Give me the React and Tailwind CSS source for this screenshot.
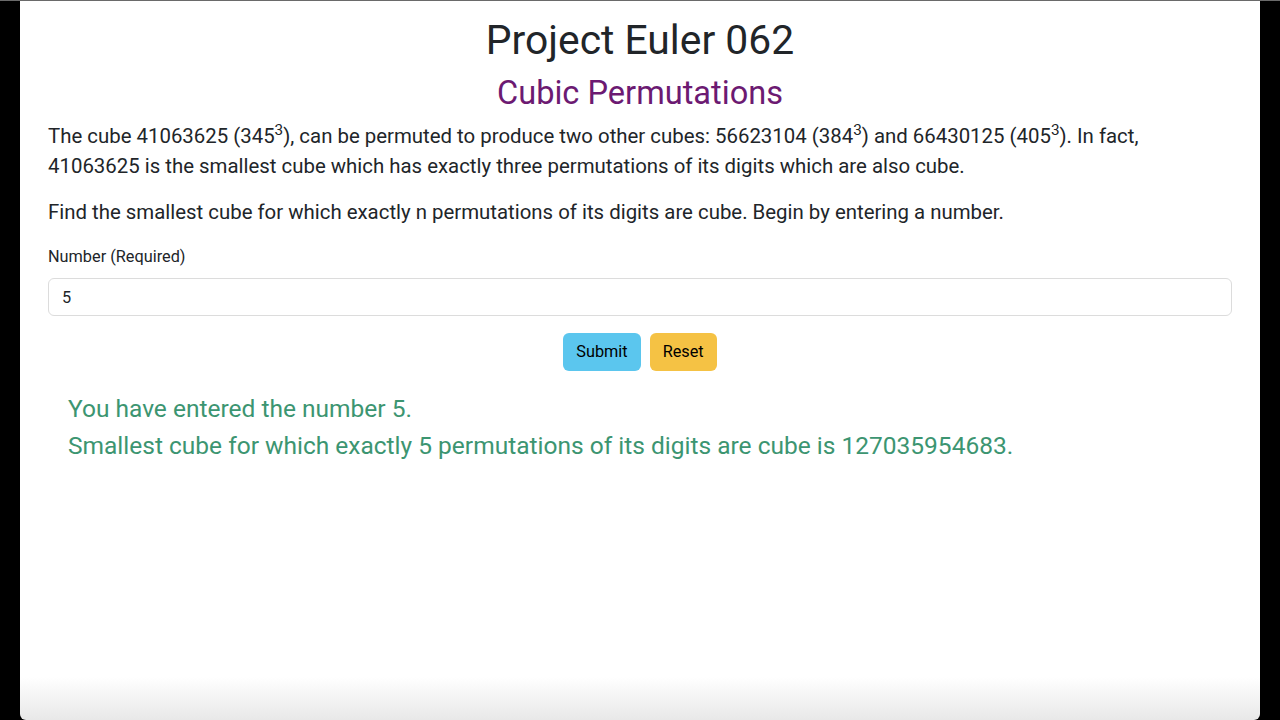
import React, { useState } from "react";

export default function App() {
  const [value, setValue] = useState("5");
  const [entered, setEntered] = useState(5);

  const answer = "127035954683";

  return (
    <div className="h-screen w-full bg-black flex justify-center border-t border-[#6a6a6a] font-['Roboto',sans-serif]">
      <div className="w-[1240px] h-full rounded-b-md bg-[linear-gradient(to_bottom,#ffffff_94%,#e8e8e8)] px-[28px] pt-[15px] text-[#212529]">
        {/* Header */}
        <h1 className="text-center text-[40.8px] leading-[48px] font-normal">Project Euler 062</h1>
        <h2 className="mt-[10px] text-center text-[32.6px] leading-[38px] font-normal text-[#6c1a72]">
          Cubic Permutations
        </h2>

        {/* Problem text */}
        <p className="mt-[9px] pr-[2px] text-[20.4px] leading-[30px]">
          The cube 41063625 (345<sup>3</sup>), can be permuted to produce two other cubes: 56623104 (384
          <sup>3</sup>) and 66430125 (405<sup>3</sup>). In fact, 41063625 is the smallest cube which has exactly
          three permutations of its digits which are also cube.
        </p>
        <p className="mt-4 text-[20.4px] leading-[30px]">
          Find the smallest cube for which exactly n permutations of its digits are cube. Begin by entering a
          number.
        </p>

        {/* Form */}
        <form
          className="mt-[18px]"
          onSubmit={(e) => {
            e.preventDefault();
            setEntered(Number(value));
          }}
        >
          <label className="block text-[16.3px] leading-6">Number (Required)</label>
          <input
            className="mt-[9px] block w-full h-[38px] rounded-md border border-[#dcdcdc] px-[13px] text-[16.3px] text-[#212529] outline-none"
            value={value}
            onChange={(e) => setValue(e.target.value)}
          />
          <div className="mt-[17px] flex justify-center gap-[9px]">
            <button
              type="submit"
              className="h-[38px] rounded-md border border-transparent bg-[#5bc6ee] px-3 text-[16.3px] text-black"
            >
              Submit
            </button>
            <button
              type="button"
              onClick={() => setValue("")}
              className="h-[38px] rounded-md border border-transparent bg-[#f5c244] px-3 text-[16.3px] text-black"
            >
              Reset
            </button>
          </div>
        </form>

        {/* Result */}
        <div className="mt-[19px] pl-5 text-[24.5px] leading-[37px] text-[#3c9571]">
          <div>You have entered the number {entered}.</div>
          <div>
            Smallest cube for which exactly {entered} permutations of its digits are cube is {answer}.
          </div>
        </div>
      </div>
    </div>
  );
}
